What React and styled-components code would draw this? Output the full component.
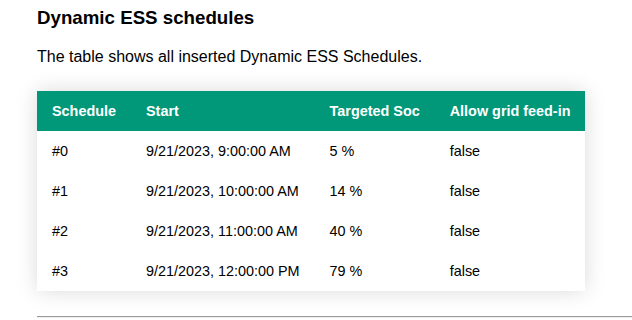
import React from "react";
import styled, { createGlobalStyle } from "styled-components";

const GlobalStyle = createGlobalStyle`
    body {
        margin: 0;
        background: #ffffff;
        font-family: "Liberation Sans", Arial, sans-serif;
        color: #000;
    }
`;

const Page = styled.div`
    padding: 7px 0 0 37px;
    overflow: hidden;
`;

const Title = styled.h3`
    font-size: 1.17em;
    font-weight: bold;
    margin: 0 0 18.72px;
`;

const Lead = styled.p`
    font-size: 16px;
    margin: 16px 0;
`;

const Table = styled.table`
    border-collapse: collapse;
    margin: 25px 0;
    font-size: 0.9em;
    box-shadow: 0 0 20px rgba(0, 0, 0, 0.15);
    background: #ffffff;
    th, td {
        padding: 12px 15px;
        text-align: left;
        white-space: nowrap;
    }
`;

const HeadRow = styled.tr`
    background-color: #009879;
    color: #ffffff;
    th {
        font-weight: bold;
    }
`;

const Rule = styled.hr`
    margin: 25px 0 0;
    border: none;
    border-top: 1px solid #9a9a9a;
    border-bottom: 1px solid #eeeeee;
`;

const schedules = [
    { start: "9/21/2023, 9:00:00 AM", soc: 5, feedIn: false },
    { start: "9/21/2023, 10:00:00 AM", soc: 14, feedIn: false },
    { start: "9/21/2023, 11:00:00 AM", soc: 40, feedIn: false },
    { start: "9/21/2023, 12:00:00 PM", soc: 79, feedIn: false },
];

function App() {
    return (
        <Page>
            <GlobalStyle />
            <Title>Dynamic ESS schedules</Title>
            <Lead>The table shows all inserted Dynamic ESS Schedules.</Lead>
            <Table>
                <thead>
                    <HeadRow>
                        <th>Schedule</th>
                        <th>Start</th>
                        <th>Targeted Soc</th>
                        <th>Allow grid feed-in</th>
                    </HeadRow>
                </thead>
                <tbody>
                    {schedules.map((s, i) => (
                        <tr key={i}>
                            <td>#{i}</td>
                            <td>{s.start}</td>
                            <td>{s.soc} %</td>
                            <td>{String(s.feedIn)}</td>
                        </tr>
                    ))}
                </tbody>
            </Table>
            <Rule />
        </Page>
    );
}

export default App;
